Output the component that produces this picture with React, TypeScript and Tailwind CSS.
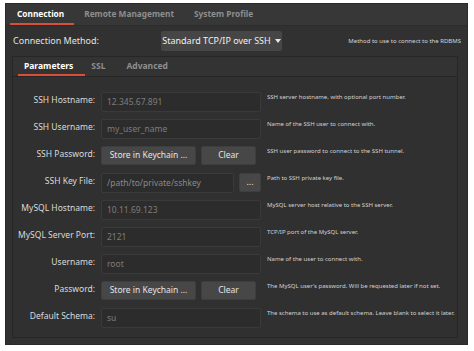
import React from "react";

const font = { fontFamily: '"Noto Sans", "Open Sans", sans-serif' };

type Row =
  | { label: string; kind: "input"; value: string; help: string }
  | { label: string; kind: "keychain"; help: string }
  | { label: string; kind: "file"; value: string; help: string };

const rows: Row[] = [
  { label: "SSH Hostname:", kind: "input", value: "12.345.67.891", help: "SSH server hostname, with  optional port number." },
  { label: "SSH Username:", kind: "input", value: "my_user_name", help: "Name of the SSH user to connect with." },
  { label: "SSH Password:", kind: "keychain", help: "SSH user password to connect to the SSH tunnel." },
  { label: "SSH Key File:", kind: "file", value: "/path/to/private/sshkey", help: "Path to SSH private key file." },
  { label: "MySQL Hostname:", kind: "input", value: "10.11.69.123", help: "MySQL server host relative to the SSH server." },
  { label: "MySQL Server Port:", kind: "input", value: "2121", help: "TCP/IP port of the MySQL server." },
  { label: "Username:", kind: "input", value: "root", help: "Name of the user to connect with." },
  { label: "Password:", kind: "keychain", help: "The MySQL user's password. Will be requested later if not set." },
  { label: "Default Schema:", kind: "input", value: "su", help: "The schema to use as default schema. Leave blank to select it later." },
];

function Input({ value, className }: { value: string; className?: string }) {
  return (
    <div
      className={
        "h-[20px] bg-[#2c2c2c] border border-[#3a3a3a] rounded-[2px] flex items-center px-[5px] text-[8.5px] text-[#7d7d7d] " +
        (className ?? "")
      }
    >
      {value}
    </div>
  );
}

function Btn({ children, className }: { children: React.ReactNode; className?: string }) {
  return (
    <div
      className={
        "h-[19px] bg-[#474747] border border-[#3e3e3e] rounded-[2px] flex items-center justify-center text-[8.5px] text-[#e4e4e4] " +
        (className ?? "")
      }
    >
      {children}
    </div>
  );
}

export default function App() {
  return (
    <div className="w-[474px] h-[351px] bg-white pt-[3px] pl-[5px]" style={font}>
      <div className="w-[463px] h-[342px] bg-[#313131] border border-[#2a2a2a] flex flex-col">
        {/* top tabs */}
        <div className="h-[22px] bg-[#373737] flex items-stretch text-[8.3px] font-bold border-b border-[#2c2c2c]">
          <div className="relative px-[11px] flex items-center text-white">
            Connection
            <div className="absolute left-[4px] right-[1px] bottom-[0px] h-[2px] bg-[#d8503a]" />
          </div>
          <div className="pl-[9px] pr-[16px] flex items-center text-[#8e8e8e]">Remote Management</div>
          <div className="px-[4px] flex items-center text-[#8e8e8e]">System Profile</div>
        </div>

        {/* connection method row */}
        <div className="h-[30px] flex items-center pl-[7px] pr-[6px] text-[9px] text-[#e2e2e2]">
          <div className="w-[148px]">Connection Method:</div>
          <div className="h-[20px] w-[121px] bg-[#464646] rounded-[2px] flex items-center justify-center gap-[4px] text-[#f0f0f0]">
            Standard TCP/IP over SSH
            <svg width="6" height="4" viewBox="0 0 6 4">
              <path d="M0 0 L6 0 L3 4 Z" fill="#e6e6e6" />
            </svg>
          </div>
          <div className="ml-auto text-[6px] text-[#d6d6d6]">Method to use to connect to the RDBMS</div>
        </div>

        {/* inner panel */}
        <div className="ml-[6px] mr-[9px] mb-[6px] flex-1 border border-[#262626] bg-[#303030] flex flex-col">
          <div className="h-[20px] flex items-stretch pl-[5px] text-[8.5px] font-bold border-b border-[#262626] bg-[#333333]">
            <div className="relative px-[6px] flex items-center text-white">
              Parameters
              <div className="absolute left-[0px] right-[-6px] bottom-[0px] h-[2px] bg-[#d8503a]" />
            </div>
            <div className="pl-[12px] pr-[15px] flex items-center text-[#8e8e8e]">SSL</div>
            <div className="px-[6px] flex items-center text-[#8e8e8e]">Advanced</div>
          </div>

          <div className="flex-1 pl-[8px] pt-[15px] flex flex-col gap-[7px]">
            {rows.map((r) => (
              <div key={r.label} className="flex items-start h-[20px]">
                <div className="w-[75px] shrink-0 flex justify-end whitespace-nowrap text-[8.5px] text-[#dadada] pt-[2px] pr-[1px]">
                  {r.label}
                </div>
                <div className="w-[160px] shrink-0 ml-[5px]">
                  {r.kind === "input" && <Input value={r.value} />}
                  {r.kind === "file" && (
                    <div className="flex gap-[5px]">
                      <Input value={r.value} className="w-[133px] text-[#8a8a8a]" />
                      <Btn className="w-[22px] text-[7px] text-[#cfcfcf] bg-[#3d3d3d]">...</Btn>
                    </div>
                  )}
                  {r.kind === "keychain" && (
                    <div className="flex gap-[5px]">
                      <Btn className="w-[95px]">Store in Keychain ...</Btn>
                      <Btn className="w-[55px]">Clear</Btn>
                    </div>
                  )}
                </div>
                <div className="ml-[6px] text-[6px] text-[#d0d0d0] pt-[1px] whitespace-nowrap">{r.help}</div>
              </div>
            ))}
          </div>
        </div>
      </div>
    </div>
  );
}
